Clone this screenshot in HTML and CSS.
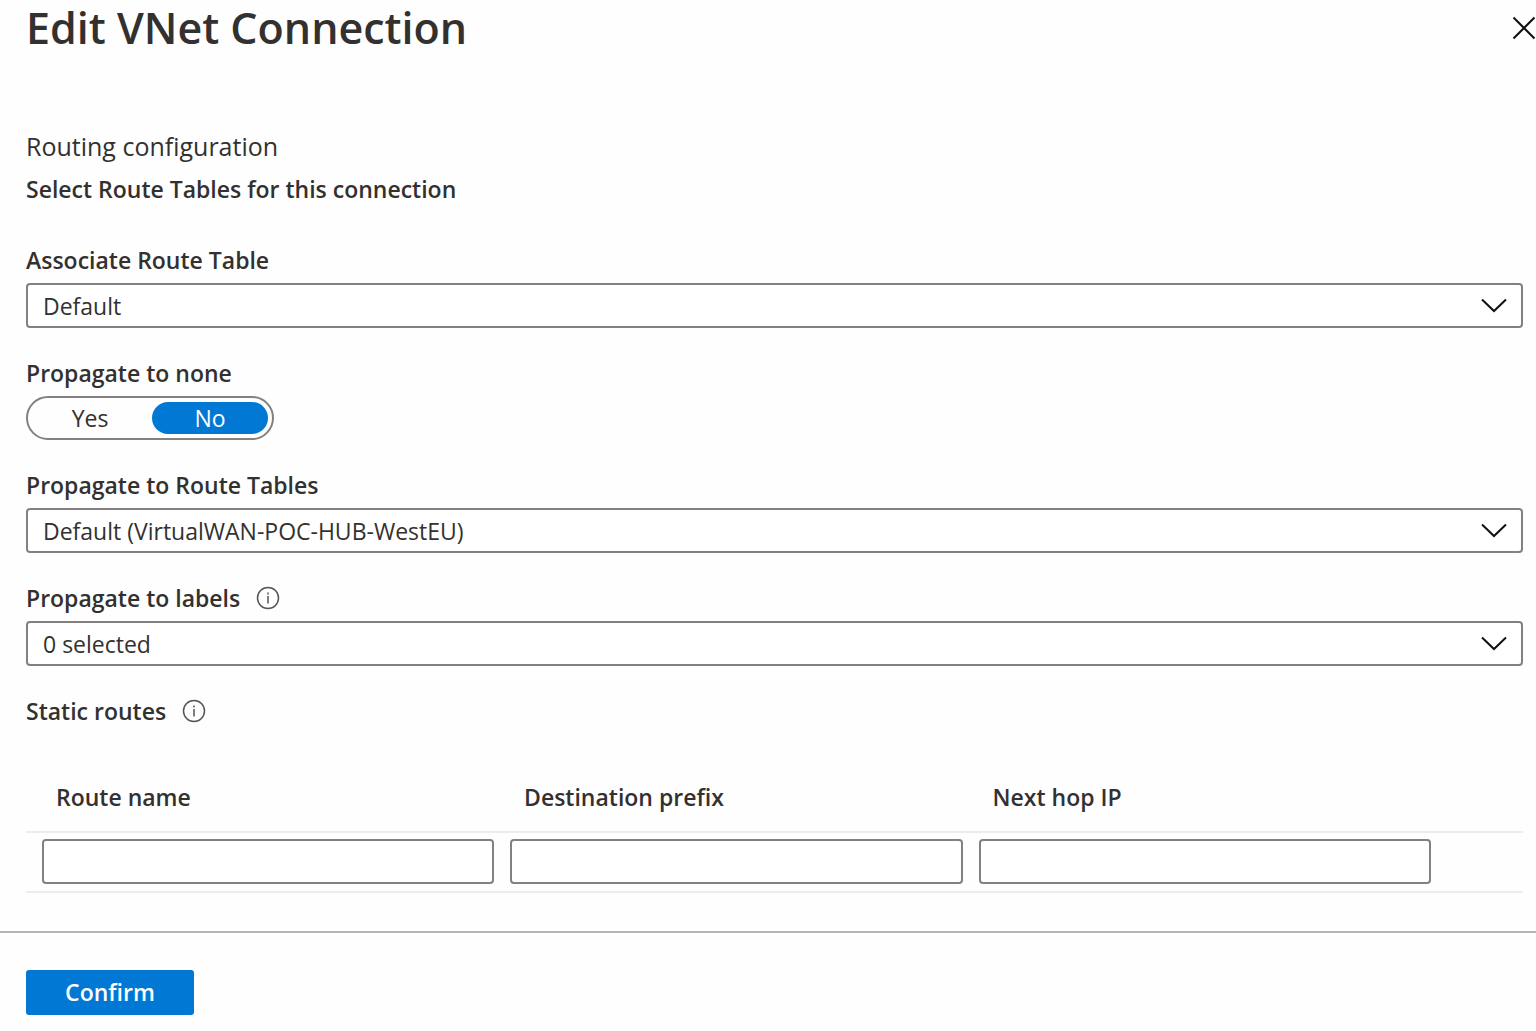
FILE: index.html
```html
<!DOCTYPE html>
<html lang="en">
<head>
<meta charset="utf-8">
<meta name="viewport" content="width=device-width, initial-scale=1">
<title>Edit VNet Connection</title>
<link rel="stylesheet" href="styles.css">
</head>
<body>
<form class="panel">
  <header class="panel-header">
    <h1 class="title">Edit VNet Connection</h1>
    <button class="close" type="button" aria-label="Close">
      <svg width="24" height="24" viewBox="0 0 24 24" aria-hidden="true"><path d="M1.5 1.5 22.500 22.500M22.500 1.5 1.500 22.500"/></svg>
    </button>
  </header>

  <main class="content">
    <h2 class="section-title">Routing configuration</h2>
    <p class="section-note">Select Route Tables for this connection</p>

    <div class="field">
      <label class="label" for="associate">Associate Route Table</label>
      <div class="select-box">
        <select class="control" id="associate"><option>Default</option></select>
        <svg class="chevron" width="26" height="15" viewBox="0 0 26 15" aria-hidden="true"><path d="M1 1.500 13 13 25 1.500"/></svg>
      </div>
    </div>

    <fieldset class="field">
      <legend class="label">Propagate to none</legend>
      <div class="toggle">
        <label class="option"><input type="radio" name="none" value="yes"><span>Yes</span></label>
        <label class="option"><input type="radio" name="none" value="no" checked><span>No</span></label>
      </div>
    </fieldset>

    <div class="field">
      <label class="label" for="propagate">Propagate to Route Tables</label>
      <div class="select-box">
        <select class="control" id="propagate"><option>Default (VirtualWAN-POC-HUB-WestEU)</option></select>
        <svg class="chevron" width="26" height="15" viewBox="0 0 26 15" aria-hidden="true"><path d="M1 1.500 13 13 25 1.500"/></svg>
      </div>
    </div>

    <div class="field">
      <div class="label-row">
        <label class="label" for="labels">Propagate to labels</label>
        <svg class="info" width="24" height="24" viewBox="0 0 24 24" aria-hidden="true"><circle cx="12" cy="12" r="10.500"/><path d="M12 10v7.500M12 6.500v2"/></svg>
      </div>
      <div class="select-box">
        <select class="control" id="labels"><option>0 selected</option></select>
        <svg class="chevron" width="26" height="15" viewBox="0 0 26 15" aria-hidden="true"><path d="M1 1.500 13 13 25 1.500"/></svg>
      </div>
    </div>

    <div class="label-row">
      <h3 class="label">Static routes</h3>
      <svg class="info" width="24" height="24" viewBox="0 0 24 24" aria-hidden="true"><circle cx="12" cy="12" r="10.500"/><path d="M12 10v7.500M12 6.500v2"/></svg>
    </div>

    <table class="routes">
      <colgroup><col class="col-first"><col class="col"><col class="col"><col></colgroup>
      <thead>
        <tr><th id="name">Route name</th><th id="prefix">Destination prefix</th><th id="hop">Next hop IP</th><td></td></tr>
      </thead>
      <tbody>
        <tr>
          <td><input class="control" type="text" aria-labelledby="name"></td>
          <td><input class="control" type="text" aria-labelledby="prefix"></td>
          <td><input class="control" type="text" aria-labelledby="hop"></td>
          <td></td>
        </tr>
      </tbody>
    </table>
  </main>

  <footer class="panel-footer">
    <button class="confirm" type="submit">Confirm</button>
  </footer>
</form>
</body>
</html>
```
FILE: styles.css
```css
* {
  box-sizing: border-box;
}

body {
  margin: 0;
  background: #fefefe;
  color: #323130;
  font: 400 23px/30px "Open Sans", "Noto Sans", sans-serif;
}

.panel-header {
  display: flex;
  justify-content: space-between;
  align-items: center;
  height: 56px;
  padding-left: 26px;
}

.title {
  margin: 0;
  font-size: 43px;
  line-height: 56px;
  font-weight: 600;
}

.close {
  display: flex;
  padding: 0;
  border: 0;
  background: none;
}

.close svg,
.chevron,
.info {
  fill: none;
  stroke: #111;
  stroke-width: 2;
}

.content {
  padding: 74px 13px 0 26px;
}

.section-title {
  margin: 0 0 12px;
  font-size: 25px;
  line-height: 32px;
  font-weight: 400;
}

.section-note {
  margin: 0 0 41px;
  font-weight: 600;
}

.field {
  margin: 0 0 30px;
  padding: 0;
  border: 0;
}

.label {
  display: block;
  margin: 0;
  padding: 0;
  font-size: 23px;
  line-height: 30px;
  font-weight: 600;
}

.field .label {
  height: 38px;
}

.label-row {
  display: flex;
  gap: 16px;
}

.info {
  margin-top: 3px;
  stroke: #555;
  stroke-width: 1.5;
}

.select-box {
  display: grid;
  align-items: center;
}

.select-box > * {
  grid-area: 1 / 1;
}

.chevron {
  justify-self: end;
  margin-right: 16px;
  pointer-events: none;
}

.control {
  display: block;
  width: 100%;
  height: 45px;
  margin: 0;
  padding: 0 15px;
  border: 2px solid #83817f;
  border-radius: 4px;
  background: #fff;
  color: #323130;
  font: inherit;
  appearance: none;
}

.toggle {
  display: inline-flex;
  gap: 4px;
  height: 44px;
  padding: 4px;
  border: 2px solid #83817f;
  border-radius: 22px;
  vertical-align: top;
}

.option input {
  position: absolute;
  opacity: 0;
}

.option span {
  display: block;
  width: 116px;
  border-radius: 16px;
  line-height: 32px;
  text-align: center;
}

.option input:checked + span {
  background: #0078d4;
  color: #fff;
}

.routes {
  width: 100%;
  margin-top: 40px;
  border-collapse: collapse;
  table-layout: fixed;
}

.col-first {
  width: 31.8%;
}

.col {
  width: 31.3%;
}

.routes tr {
  border-bottom: 2px solid #ededed;
}

.routes th {
  height: 66px;
  padding: 0 22px 4px;
  font-weight: 600;
  text-align: left;
}

.routes th:first-child {
  padding-left: 30px;
}

.routes td {
  padding: 6px 8px 7px;
}

.routes td:first-child {
  padding-left: 16px;
}

.panel-footer {
  margin-top: 38px;
  padding: 37px 26px 16px;
  border-top: 2px solid #b5b5b5;
}

.confirm {
  width: 168px;
  height: 45px;
  padding: 0 0 2px;
  border: 0;
  border-radius: 3px;
  background: #0078d4;
  color: #fff;
  font: inherit;
  font-weight: 600;
}
```
